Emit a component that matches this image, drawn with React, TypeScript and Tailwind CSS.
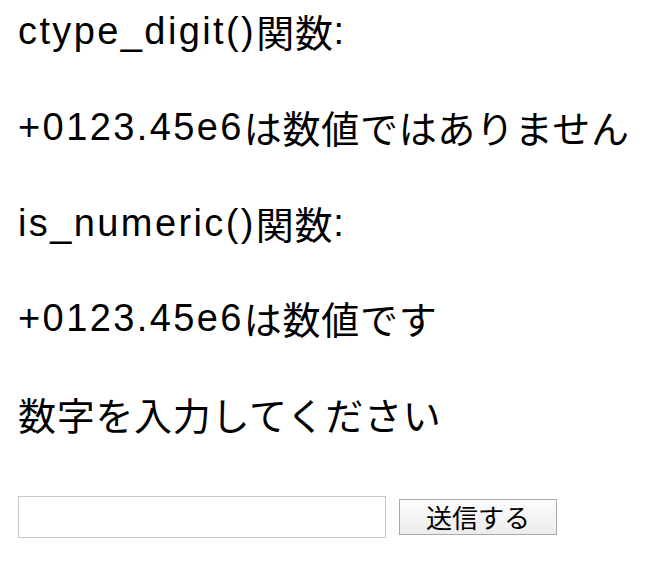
import React from "react";

function Mixed({ text }: { text: string }) {
  const parts = text.match(/[\x00-\x7F]+|[^\x00-\x7F]+/g) || [];
  return (
    <>
      {parts.map((p, i) =>
        /^[\x00-\x7F]+$/.test(p) ? (
          <span key={i} className="font-['Liberation_Sans',Arial,sans-serif] tracking-[2.4px]">
            {p}
          </span>
        ) : (
          <span key={i} className="font-['Noto_Sans_CJK_JP',sans-serif] tracking-[0.7px]">
            {p}
          </span>
        )
      )}
    </>
  );
}

const lines = [
  "ctype_digit()関数:",
  "+0123.45e6は数値ではありません",
  "is_numeric()関数:",
  "+0123.45e6は数値です",
  "数字を入力してください",
];

export default function App() {
  return (
    <div className="min-h-[574px] w-[670px] bg-white px-[18px] pt-[7px] text-black font-['Liberation_Sans','Noto_Sans_CJK_JP',sans-serif]">
      <div className="flex flex-col gap-[47.75px]">
        {lines.map((t, i) => (
          <p key={i} className="flex h-[48px] items-center whitespace-nowrap text-[38px] leading-[48px]">
            <Mixed text={t} />
          </p>
        ))}
      </div>
      <div className="mt-[58px] flex items-center gap-[13px]">
        <input
          type="text"
          className="h-[42px] w-[368px] border border-[#c8c8c8] bg-white outline-none"
        />
        <button
          type="button"
          className="flex h-[36px] w-[158px] items-center justify-center border border-[#a9a9a9] bg-gradient-to-b from-[#fdfdfd] to-[#ececec] font-['Noto_Sans_CJK_JP',sans-serif] text-[26px] leading-none"
        >
          送信する
        </button>
      </div>
    </div>
  );
}
